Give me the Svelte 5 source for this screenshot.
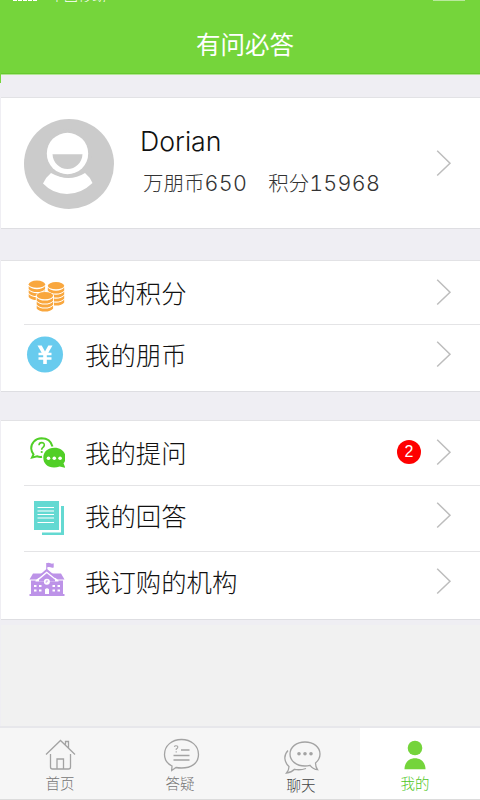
<script>
	const user = { name: 'Dorian', coins: 650, points: 15968 };

	const groups = [
		[
			{ icon: 'points', label: '我的积分' },
			{ icon: 'coin', label: '我的朋币' }
		],
		[
			{ icon: 'ask', label: '我的提问', badge: 2 },
			{ icon: 'answer', label: '我的回答' },
			{ icon: 'school', label: '我订购的机构' }
		]
	];

	const tabs = [
		{ id: 'home', label: '首页' },
		{ id: 'qa', label: '答疑' },
		{ id: 'chat', label: '聊天' },
		{ id: 'me', label: '我的' }
	];

	let active = $state('me');
</script>

{#snippet arrow()}
	<svg class="arrow" width="16" height="28" viewBox="0 0 16 28">
		<path d="M1.2 1.7 14 14.2 1.2 26.5" fill="none" stroke="#bdbdbd" stroke-width="1.5" />
	</svg>
{/snippet}

{#snippet stack(x, y, n)}
	<ellipse cx={x} cy={y} rx="8.2" ry="3.6" />
	{#each Array(n) as _, i}
		<path
			transform="translate({x} {y + i * 4})"
			d="M-8.2 1.9C-6 6 6 6 8.2 1.9V4.8C6 8.9-6 8.900-8.2 4.8Z"
		/>
	{/each}
{/snippet}

<div class="app">
	<header>
		<div class="status">
			<span class="signal"><i></i><i></i><i></i><i></i><i></i></span>
			<span class="carrier">中国移动</span>
			<span class="battery"></span>
		</div>
		<h1>有问必答</h1>
	</header>

	<section class="profile">
		<svg class="avatar" width="90" height="90" viewBox="0 0 90 90">
			<circle cx="45" cy="45" r="45" fill="#cbcbcb" />
			<path d="M27 54Q45 64 61 54Q66 58 68.5 64Q57 75 43 75Q29 75 19 64.5Q22 58 27 54Z" fill="#fff" />
			<circle cx="43.5" cy="34.5" r="24" fill="#cbcbcb" />
			<circle cx="43.5" cy="34.5" r="20.700" fill="#fff" />
			<path d="M28.500 35.300H58.500C58 44 51.500 50 43.500 50S29 44 28.500 35.300Z" fill="#cbcbcb" />
		</svg>
		<div class="info">
			<div class="name">{user.name}</div>
			<div class="stats">
				<span>万朋币<b>{user.coins}</b></span>
				<span>积分<b>{user.points}</b></span>
			</div>
		</div>
		{@render arrow()}
	</section>

	{#each groups as rows, g}
		<section class="list list-{g}">
			{#each rows as row}
				<div class="row">
					<svg class="icon" width="40" height="40" viewBox="0 0 40 40">
						{#if row.icon === 'points'}
							<g fill="#f9a73e">
								{@render stack(11.9, 12.2, 3)}
								{@render stack(31, 13.7, 4)}
								<path d="M10.800 23Q20 15.500 29 23V38Q20 44 10.800 38Z" fill="#fff" />
								{@render stack(19.9, 23.6, 3)}
							</g>
						{:else if row.icon === 'coin'}
							<circle cx="20" cy="20.500" r="18" fill="#68cbee" />
							<path
								d="M12.500 11.500H16.700L20 17.500 23.300 11.500H27.500L23.300 18.700H26.500V21.200H21.800V23.200H26.500V25.700H21.800V30H18.200V25.700H13.500V23.200H18.200V21.200H13.500V18.700H16.700Z"
								fill="#fff"
							/>
						{:else if row.icon === 'ask'}
							<path
								d="M27.500 14.500C26 9 21.500 6.300 16.500 6.300C10 6.500 6 11.500 6.200 16.500C6.400 19.500 7.700 21.300 8.500 22.300L7 25.600L12 24.300Q14.500 25.300 17 24.800"
								fill="none"
								stroke="#51cf27"
								stroke-width="2"
							/>
							<path
								d="M14 13.300Q14.100 10.600 16.700 10.600T19.300 13.100Q19.200 14.700 17.500 15.800Q16.700 16.400 16.700 17.800"
								fill="none"
								stroke="#51cf27"
								stroke-width="1.6"
							/>
							<circle cx="16.700" cy="20" r="1.100" fill="#51cf27" />
							<path
								d="M29.500 15.800C36 15.800 40.600 20 40.600 25.700Q40.600 29 38.500 31.300L40.300 35.800L34.700 34.400Q32 35.500 29 35.500C22.500 35.500 18.300 31.300 18.300 25.700S22.500 15.800 29.500 15.800Z"
								fill="#51cf27"
							/>
							<g fill="#fff">
								<circle cx="23.500" cy="26.200" r="1.800" />
								<circle cx="29.300" cy="26.200" r="1.800" />
								<circle cx="35.100" cy="26.200" r="1.800" />
							</g>
						{:else if row.icon === 'answer'}
							<path d="M9 6H34V35H9Z" fill="#64d9d2" />
							<path d="M36 11H39V40H17V37.500H36Z" fill="#64d9d2" />
							<path
								d="M12.500 12.500H29M12.500 16H29M12.500 19.500H29M12.500 23H29M12.500 27.500H29"
								stroke="#fff"
								stroke-width="1.200"
							/>
						{:else}
							<g fill="#bd93e8">
								<path d="M21.200 2H22.300Q24 1.500 25.500 2.300T28.700 2.200V6.400Q27 7 25.500 6.300T22.300 6.300V9H21.200Z" />
								<path d="M8 12.500H36L39.500 18.500H4.500Z" />
								<path d="M6 19.500H38V33H39.500V35H4.500V33H6Z" />
							</g>
							<path d="M10.500 19.500 22 9.700 33.500 19.500V20.500H10.500Z" fill="#fff" />
							<path d="M11.500 16.800 21.700 7.800 32.500 16.800H29.500L21.700 10.500 14 16.800Z" fill="#bd93e8" />
							<path d="M14 20.500V18.800L21.800 12.300 30 18.800V20.500Z" fill="#bd93e8" />
							<circle cx="21.900" cy="20.800" r="3" fill="#fff" />
							<path d="M22 19V21H20.500" fill="none" stroke="#bd93e8" stroke-width=".8" />
							<path
								d="M20 33V28.300Q22 26 24 28.300V33ZM9 24H11.500V26H9ZM14 24H16.500V26H14ZM27.500 24H30V26H27.500ZM32.500 24H35V26H32.500ZM9 28.500H11.500V30.500H9ZM14 28.500H16.500V30.500H14ZM27.500 28.500H30V30.500H27.500ZM32.500 28.500H35V30.500H32.500Z"
								fill="#fff"
							/>
						{/if}
					</svg>
					<span class="label">{row.label}</span>
					{#if row.badge}
						<span class="badge">{row.badge}</span>
					{/if}
					{@render arrow()}
				</div>
			{/each}
		</section>
	{/each}

	<div class="filler"></div>

	<nav>
		{#each tabs as tab}
			<button class={tab.id} class:active={active === tab.id} onclick={() => (active = tab.id)}>
				<svg width="40" height="36" viewBox="0 0 40 36" fill="none" stroke="#a3a3a3" stroke-width="1.3">
					{#if tab.id === 'home'}
						<path d="M6 17.5 20.5 3.5 35 17.5M10.5 17V30Q10.5 32 12.5 32H28.5Q30.5 32 30.5 30V17M17 32V22H23.5V32M25.5 7.5V4.5H28.5V11" />
					{:else if tab.id === 'qa'}
						<path d="M12 29C7 26.5 4.5 22.5 4.5 17.5C4.5 8.5 12 2.5 21.5 2.5S38.5 8.5 38.5 17.5S31 31 21.5 31Q18.5 31 16 30.5L11.7 33.5Z" />
						<path d="M21 13H29.5M13.5 18.5H29.5M13.5 23H29.5" />
						<path d="M14.3 9.8Q14.7 8.7 16 8.7Q18 8.7 17.8 10.3Q17.7 11.3 16.2 12V13M16.2 14.2V15.5" stroke-width="1.1" />
					{:else if tab.id === 'chat'}
						<path d="M34.5 25C37.5 22.5 39 19.5 39 16C39 9 32.5 4 24 4S9 9 9 16S15.5 28 24 28Q26.5 28 29 27.3Q32.5 31.5 36.5 31.7Q34.5 29 34.5 25ZM7 12.5C2.5 17 2.8 24 8 28.5Q8 32 5.5 35Q10.5 34.5 13.5 31.3Q19 32.5 25 30.5" />
						<g fill="#a3a3a3" stroke="none">
							<circle cx="18" cy="15.7" r="1.8" />
							<circle cx="24" cy="15.7" r="1.8" />
							<circle cx="30" cy="15.7" r="1.8" />
						</g>
					{:else}
						<g fill="#74d43b" stroke="none">
							<circle cx="20" cy="11" r="7.3" />
							<path d="M9.5 32.2C9.5 25.5 14 21.3 20 21.3S30.5 25.5 30.5 32.2Z" />
						</g>
					{/if}
				</svg>
				<span>{tab.label}</span>
			</button>
		{/each}
	</nav>
</div>

<style>
	:global(body) {
		margin: 0;
	}
	.app {
		box-sizing: border-box;
		width: 480px;
		height: 800px;
		display: flex;
		flex-direction: column;
		overflow: hidden;
		background: #efeef3;
		font-family: 'Noto Sans CJK SC', sans-serif;
		font-weight: 300;
		color: #111;
	}
	header {
		position: relative;
		flex: none;
		box-sizing: border-box;
		height: 75px;
		background: #75d53b;
		border-bottom: 1px solid #b2e593;
		box-shadow: inset 0 -1px #67c92f;
	}
	header::after {
		content: '';
		position: absolute;
		left: 0;
		top: 73px;
		width: 1px;
		height: 10px;
		background: #75d53b;
	}
	.status {
		height: 2px;
		overflow: hidden;
		display: flex;
		align-items: flex-end;
		color: #fff;
		padding: 0 15px 0 13px;
	}
	.signal {
		display: flex;
		gap: 1px;
		align-self: flex-start;
	}
	.signal i {
		width: 4px;
		height: 1px;
		background: #fff;
	}
	.carrier {
		font-size: 14px;
		line-height: 14px;
		margin-left: 13px;
	}
	.battery {
		width: 32px;
		height: 1px;
		background: #b9e99d;
		margin-left: auto;
		align-self: flex-start;
	}
	h1 {
		margin: 0;
		padding: 24px 0 0 10px;
		text-align: center;
		font-size: 24.5px;
		line-height: 36px;
		font-weight: 400;
		color: #fff;
	}
	section {
		flex: none;
		box-sizing: border-box;
		background: #fff;
		border-top: 1px solid #e2e2e5;
		border-bottom: 1px solid #dedee2;
		margin-left: 1px;
	}
	.arrow {
		flex: none;
	}
	.profile {
		margin-top: 22px;
		height: 132px;
		display: flex;
		align-items: center;
		padding: 0 28px 0 23px;
	}
	.avatar {
		margin-top: 2px;
	}
	.profile .arrow {
		margin-bottom: 1px;
	}
	.info {
		flex: 1;
		margin-left: 26px;
	}
	.name {
		font-family: Inter, 'Noto Sans CJK SC', sans-serif;
		font-size: 26.7px;
		line-height: 38px;
	}
	.stats {
		display: flex;
		gap: 21px;
		margin-left: 3px;
		font-size: 20.5px;
		line-height: 44px;
		color: #333;
	}
	.stats b {
		font-family: Inter, sans-serif;
		font-size: 21.5px;
		font-weight: 300;
		font-variant-numeric: tabular-nums;
		letter-spacing: 0.3px;
	}
	.list-0 {
		margin-top: 31px;
		height: 132px;
	}
	.list-1 {
		margin-top: 28px;
		height: 200px;
	}
	.row {
		box-sizing: border-box;
		height: 63px;
		margin-left: 23px;
		padding: 0 28px 2px 0;
		display: flex;
		align-items: center;
	}
	.row + .row {
		border-top: 1px solid #e4e4e6;
		padding-bottom: 4px;
	}
	.list-1 .row {
		height: 64px;
	}
	.list-1 .row + .row {
		height: 66px;
		padding-bottom: 7px;
	}
	.icon {
		margin-left: 1px;
	}
	.label {
		flex: 1;
		margin-left: 20px;
		font-size: 25.4px;
		line-height: 36px;
	}
	.badge {
		width: 24px;
		height: 24px;
		border-radius: 50%;
		background: #fe0000;
		color: #fff;
		text-align: center;
		font: 16px/24px 'Liberation Sans', sans-serif;
		margin-right: 15px;
	}
	.filler {
		flex: 1;
		margin: 5px 0 0 1px;
		background: #f1f1f1;
	}
	nav {
		flex: none;
		height: 74px;
		box-sizing: border-box;
		display: grid;
		grid-template-columns: repeat(4, 1fr);
		border-top: 2px solid #e7e7eb;
		border-bottom: 1px solid #dcdcdc;
		background: #f6f6f6;
	}
	button {
		border: 0;
		margin: 0;
		padding: 9px 0 0;
		background: none;
		display: flex;
		flex-direction: column;
		align-items: center;
		font: inherit;
		font-size: 14.5px;
		line-height: 20px;
		color: #777;
	}
	button.chat {
		padding: 10px 0 0 2px;
		color: #444;
	}
	button.chat span {
		margin-top: 1px;
	}
	button.active {
		padding-right: 10px;
		background: #fff;
		color: #4fc61e;
	}
</style>
